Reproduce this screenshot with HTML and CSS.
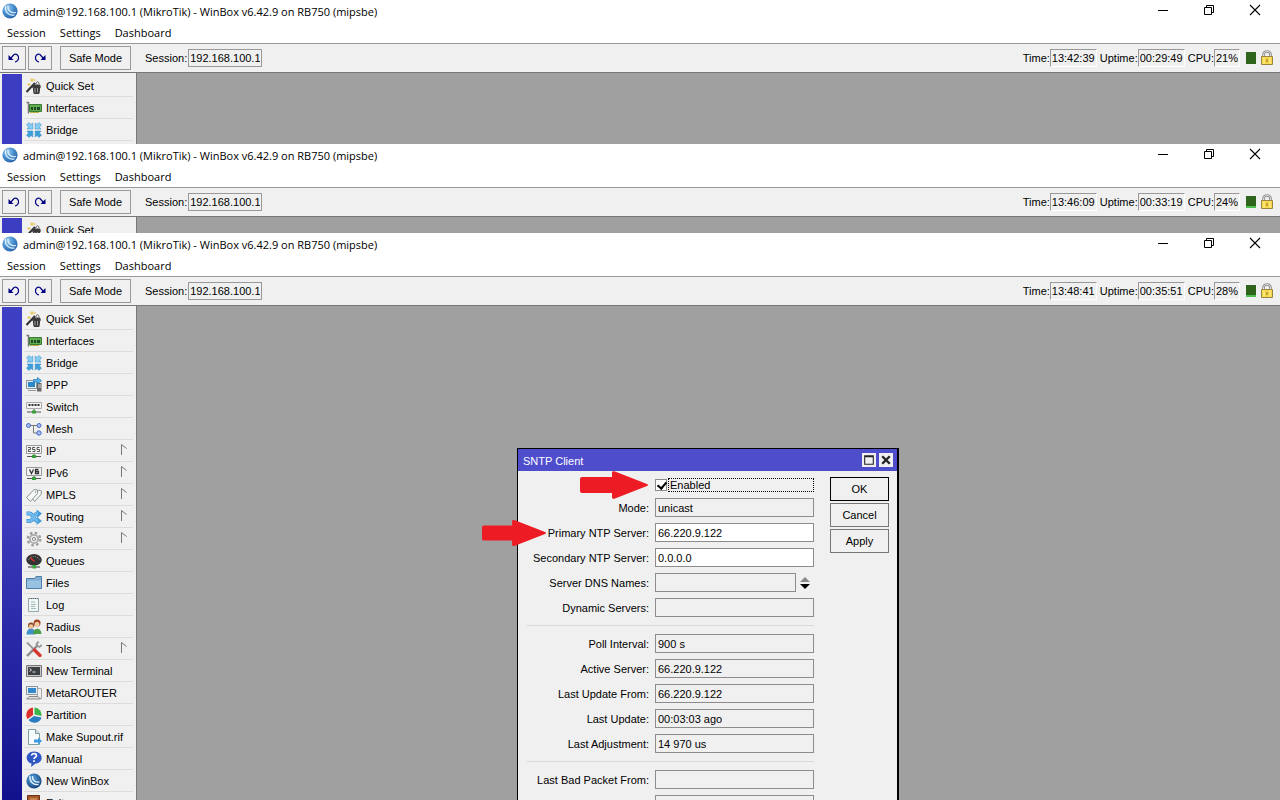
FILE: index.html
```
<!DOCTYPE html>
<html lang="en">
<head>
    <meta charset="utf-8">
    <title>WinBox - SNTP Client</title>
    <link rel="stylesheet" href="styles.css">
</head>
<body>
    <!-- icons -->
    <svg class="defs" aria-hidden="true">
        <defs>
            <radialGradient id="ball" cx="35%" cy="30%" r="75%">
                <stop offset="0" stop-color="#9fd0f2"/>
                <stop offset="0.5" stop-color="#4a90d0"/>
                <stop offset="1" stop-color="#2a62a8"/>
            </radialGradient>
            <radialGradient id="darkball" cx="40%" cy="35%" r="70%">
                <stop offset="0" stop-color="#5aa5e0"/>
                <stop offset="1" stop-color="#123f78"/>
            </radialGradient>
        </defs>
        <symbol id="i-logo" viewBox="0 0 16 16">
            <circle cx="8" cy="8" r="7.6" fill="url(#ball)"/>
            <path d="M3.500 3C2.500 9 7 13 12.500 12M6 2.500C5.500 7.500 9 10.500 14 9.500" fill="none" stroke="#e4f3fc" stroke-width="1.100"/>
        </symbol>
        <symbol id="i-winbox" viewBox="0 0 16 16">
            <circle cx="8" cy="8" r="7.600" fill="url(#darkball)"/>
            <path d="M4 3C3 8 7 12.500 12.500 11.500M6.500 3C6 7 9 9.500 13.500 9" fill="none" stroke="#e4f3fc" stroke-width="1.300"/>
        </symbol>
        <symbol id="i-undo" viewBox="0 0 12 12">
            <path d="M2.500 6.500L6 2.500C8.500 1.500 11 3.500 10.500 6.500 10.200 8.500 9 9.500 7 10" fill="none" stroke="#000080" stroke-width="1.200"/>
            <path d="M0.500 3v5h5z" fill="#000080"/>
        </symbol>
        <symbol id="i-redo" viewBox="0 0 12 12">
            <path d="M9.500 6.500L6 2.500C3.500 1.500 1 3.500 1.500 6.500 1.800 8.500 3 9.500 5 10" fill="none" stroke="#000080" stroke-width="1.200"/>
            <path d="M11.500 3v5h-5z" fill="#000080"/>
        </symbol>
        <symbol id="i-lock" viewBox="0 0 14 16">
            <path d="M3.500 7V4.500C3.500 0.500 10.500 0.500 10.500 4.500V7" fill="none" stroke="#8a8a8a" stroke-width="2.600"/>
            <path d="M3.500 7V4.500C3.500 0.500 10.500 0.500 10.500 4.500V7" fill="none" stroke="#e4e4e4" stroke-width="1"/>
            <path d="M1.500 6.500h11v8h-11z" fill="#f6d64a" stroke="#9a8540"/>
            <path d="M4 7v7M10 7v7" stroke="#fdf09a"/>
            <path d="M7 9v3" stroke="#b08c2c" stroke-width="1.500"/>
        </symbol>
        <symbol id="i-quick" viewBox="0 0 16 16">
            <path d="M0.500 14L9 5" stroke="#333" stroke-width="2"/>
            <path d="M6 9h9M7 7h7l-1 8.500H8z" fill="#3a3a3a" stroke="#3a3a3a"/>
            <path d="M9 10v4.500M11.500 10v4.500" stroke="#999"/>
            <path d="M10 6c0-3 3-3 3 0" fill="none" stroke="#666"/>
            <path d="M6 0v4M4 2h4M3 5v3M1.500 6.500h3M9 1v2" stroke="#e2c244"/>
        </symbol>
        <symbol id="i-iface" viewBox="0 0 16 16">
            <path d="M0.500 2.500h2v11" fill="none" stroke="#777" stroke-width="1.500"/>
            <path d="M3.500 4.500h12v7h-12z" fill="#5fae50" stroke="#3a7c36"/>
            <path d="M5 7h2v3H5zM8 7h2v3H8zM11 7h3v3h-3z" fill="#1f4a22"/>
            <path d="M4 12.500h9" stroke="#bfae48"/>
        </symbol>
        <symbol id="i-bridge" viewBox="0 0 16 16">
            <g stroke="#2f86c4" stroke-width="0.500">
                <path d="M0.500 3l2.500-2.500 2 2 1.800-1.500v6H1l1.700-2z" fill="#86cdf2"/>
                <path d="M15.500 3l-2.500-2.500-2 2L9.200 1v6H15l-1.700-2z" fill="#86cdf2"/>
                <path d="M0.500 13l2.500 2.500 2-2 1.800 1.500V9H1l1.700 2z" fill="#3d9fd8"/>
                <path d="M15.500 13l-2.500 2.500-2-2L9.200 15V9H15l-1.700 2z" fill="#3d9fd8"/>
            </g>
        </symbol>
        <symbol id="i-ppp" viewBox="0 0 16 16">
            <path d="M0.500 3.500h10v8h-10z" fill="#e8eef2" stroke="#8b959c"/>
            <path d="M2 5h7v5H2z" fill="#2c86c8"/>
            <path d="M2 13.500h8" stroke="#999"/>
            <path d="M11 6h4.500v8.500H11z" fill="#666"/>
            <path d="M12 8h3M12 10h3" stroke="#ddd"/>
            <path d="M7.500 2.500h4V0.500l4 3.200-4 3.200V5h-4z" fill="#56b4ec" stroke="#1d72b4" stroke-width="0.700"/>
        </symbol>
        <symbol id="i-switch" viewBox="0 0 16 16">
            <path d="M0.500 3.500h15v6h-15z" fill="#f4f4f4" stroke="#aaa"/>
            <path d="M2.500 6h2M5.500 6h2M8.500 6h2M11.500 6h2" stroke="#333" stroke-width="2"/>
            <path d="M1 13h14M8 10v3" stroke="#555"/>
            <path d="M6 11.500h4v3H6z" fill="#35a035"/>
        </symbol>
        <symbol id="i-mesh" viewBox="0 0 16 16">
            <path d="M4 4.500h7M7.500 5v7H11" fill="none" stroke="#777"/>
            <g fill="#a6bdf4" stroke="#4968c4">
                <circle cx="2.500" cy="4.500" r="2"/>
                <circle cx="13" cy="4.500" r="2"/>
                <circle cx="13" cy="12" r="2.200"/>
            </g>
        </symbol>
        <symbol id="i-net" viewBox="0 0 16 16">
            <path d="M0.500 2.500h15v8h-15z" fill="#f4f4f4" stroke="#999"/>
            <path d="M1 13.500h14M8 11v3" stroke="#555"/>
            <path d="M6 12h4v3H6z" fill="#35a035"/>
        </symbol>
        <symbol id="i-ip" viewBox="0 0 16 16">
            <use href="#i-net"/>
            <path d="M2 4.500h2.500v2H2.500v2H5M9 4.500H6.500v2H9v2H6.500M13.500 4.500H11v2h2.500v2H11" fill="none" stroke="#444" stroke-width="0.900"/>
        </symbol>
        <symbol id="i-ipv6" viewBox="0 0 16 16">
            <use href="#i-net"/>
            <path d="M3.500 4.500L5.500 8.500 7.500 4.500M12.500 4.500H9.500v4h3v-2h-3" fill="none" stroke="#333" stroke-width="1.300"/>
        </symbol>
        <symbol id="i-mpls" viewBox="0 0 16 16">
            <g fill="#f6f8f8" stroke="#8b9696">
                <path d="M6 10.500L12.500 3l3 1-.5 3.500-6.500 7z"/>
                <path d="M0.500 10.500L8 2.500l3.500.5v3.500l-7 8z"/>
            </g>
            <circle cx="9.500" cy="5" r="0.800" fill="#8b9696"/>
        </symbol>
        <symbol id="i-routing" viewBox="0 0 16 16">
            <path d="M0.500 4.500h3C7 4.500 8 12 12 12M0.500 12h3C7.500 12 7.500 4.500 12 4.500" fill="none" stroke="#3a88c8" stroke-width="4"/>
            <path d="M10.500 0.500l5.500 4-5 4.500zM11 8l5 4-5.500 4z" fill="#469ddc"/>
            <path d="M1 4.500h2.500C7 4.500 8 12 12 12M1 12h2.500C7.500 12 7.500 4.500 12 4.500" fill="none" stroke="#6db9ec" stroke-width="3"/>
        </symbol>
        <symbol id="i-system" viewBox="0 0 16 16">
            <circle cx="8" cy="8" r="6.300" fill="none" stroke="#9a9a9a" stroke-width="2.200" stroke-dasharray="2.500 2.450"/>
            <circle cx="8" cy="8" r="4.200" fill="#eee" stroke="#aaa" stroke-width="1.800"/>
            <circle cx="8" cy="8" r="1.600" fill="#f0f0f0" stroke="#888"/>
        </symbol>
        <symbol id="i-queues" viewBox="0 0 16 16">
            <ellipse cx="8" cy="6.800" rx="7.800" ry="5.800" fill="#333"/>
            <path d="M2.500 7C4 2.500 12 2.500 13.500 7" fill="none" stroke="#8f8f8f" stroke-dasharray="1 1"/>
            <path d="M4 4.500L8.500 8.500" stroke="#e03030" stroke-width="1.300"/>
            <path d="M2 14h12" stroke="#333"/>
            <path d="M6.500 12h3.500v3.500H6.500z" fill="#3aa83a"/>
        </symbol>
        <symbol id="i-files" viewBox="0 0 16 16">
            <path d="M0.500 3.500h8l1.500-2h5.500v12H0.500z" fill="#7faed2" stroke="#4d7ea6"/>
            <path d="M1 5.500h14V13H1z" fill="#98c2e2"/>
        </symbol>
        <symbol id="i-log" viewBox="0 0 16 16">
            <path d="M2.500 1.500h10v13h-10z" fill="#eff6f5" stroke="#94aaa9"/>
            <path d="M5 5h4M5 7.500h5M5 9.500h4M5 11.500h5" stroke="#9fbcba"/>
            <path d="M3 1.500h9" stroke="#667" stroke-dasharray="1 1"/>
        </symbol>
        <symbol id="i-radius" viewBox="0 0 16 16">
            <path d="M0.500 15.500c0-8 9-8 9 0z" fill="#3f8fc8"/>
            <path d="M7 15c0-7 8.500-7 8.500 0z" fill="#4c9e4a"/>
            <circle cx="5" cy="6.500" r="3" fill="#8a4b22"/>
            <circle cx="5" cy="7.500" r="2.200" fill="#f0c49a"/>
            <circle cx="11" cy="4" r="3.500" fill="#9c3f20"/>
            <circle cx="11" cy="5.200" r="2.500" fill="#f2c8a0"/>
        </symbol>
        <symbol id="i-tools" viewBox="0 0 16 16">
            <path d="M1 15L12 4" stroke="#8a8a8a" stroke-width="2.400"/>
            <path d="M10 4l2.500-3.500M12.500 6.500L16 4" stroke="#999" stroke-width="2"/>
            <path d="M1 1.500L9 9.500" stroke="#999" stroke-width="1.800"/>
            <path d="M8.500 9l5.500 5.500" stroke="#d23a30" stroke-width="3.400" stroke-linecap="round"/>
        </symbol>
        <symbol id="i-term" viewBox="0 0 16 16">
            <path d="M0.500 2.500h15v11h-15z" fill="#ccc" stroke="#777"/>
            <path d="M2 4h12v8H2z" fill="#3c4045"/>
            <path d="M3.500 5.500l2 1.500-2 1.500M6.500 9h3" fill="none" stroke="#ddd"/>
        </symbol>
        <symbol id="i-meta" viewBox="0 0 16 16">
            <path d="M0.500 1.500h11v8H0.500z" fill="#e8eef2" stroke="#8b959c"/>
            <path d="M2 3h8v5H2z" fill="#3488cc"/>
            <path d="M11.500 3.500h4v10h-4z" fill="#eee" stroke="#aaa"/>
            <path d="M0.500 14L3 11.500h9L14.500 14z" fill="#ddd" stroke="#888"/>
        </symbol>
        <symbol id="i-part" viewBox="0 0 16 16">
            <path d="M7 8V0.500A7.500 7.500 0 0 0 1.500 12z" fill="#dd2f2c"/>
            <path d="M8.500 7.500V0.500A7.500 7.500 0 0 1 15.500 9z" fill="#3bb54a"/>
            <path d="M8 9l7.500 1.500A7.500 7.500 0 0 1 2.500 13z" fill="#2a7dc0"/>
        </symbol>
        <symbol id="i-supout" viewBox="0 0 16 16">
            <path d="M2.500 0.500h7l4 4v11h-11z" fill="#f8fbfb" stroke="#7fa0a0"/>
            <path d="M9.500 0.500v4h4" fill="#dde" stroke="#7fa0a0"/>
            <path d="M8 10.500h4V8.500l4 3.500-4 3.500v-2H8z" fill="#3d9be0"/>
        </symbol>
        <symbol id="i-manual" viewBox="0 0 16 16">
            <path d="M8 0.500c10 0 10 12 1.500 12L5 16l.5-3.500C-1.500 11-1 0.500 8 0.500z" fill="#3058c4"/>
            <path d="M5.500 4.500c0-2.500 5-2.500 5 0C10.500 6.500 8 6.200 8 8M8 9.300v1.700" fill="none" stroke="#fff" stroke-width="1.700"/>
        </symbol>
        <symbol id="i-exit" viewBox="0 0 16 16">
            <path d="M1.500 0.500h12v15h-12z" fill="#a8582a" stroke="#6b3312"/>
            <path d="M4 3h7v4H4zM4 9h7v5H4z" fill="#c98650"/>
        </symbol>
        <symbol id="i-more" viewBox="0 0 6 11">
            <path d="M0.500 11V0.500L5.500 4.500" fill="none" stroke="#777"/>
        </symbol>
        <symbol id="i-min" viewBox="0 0 12 12">
            <path d="M1 6.500h10" stroke="#000"/>
        </symbol>
        <symbol id="i-restore" viewBox="0 0 12 12">
            <path d="M1.500 3.500h7v7h-7zM3.500 3.500v-2h7v7h-2" fill="none" stroke="#000"/>
        </symbol>
        <symbol id="i-close" viewBox="0 0 12 12">
            <path d="M1 1l10 10M11 1L1 11" stroke="#000" stroke-width="1.100"/>
        </symbol>
        <symbol id="i-arrow" viewBox="0 0 68 28">
            <path d="M2 6h30V1.500q0-2 3-1L67 13q2 1 0 2L35 27.500q-3 1-3-1V22H2q-2 0-2-2V8q0-2 2-2z" fill="#ed1c24"/>
        </symbol>
    </svg>

    <section class="window strip-tall">
        <header class="titlebar">
            <svg class="icon"><use href="#i-logo"/></svg>
            <h1>admin@192.168.100.1 (MikroTik) - WinBox v6.42.9 on RB750 (mipsbe)</h1>
            <button aria-label="Minimize"><svg><use href="#i-min"/></svg></button>
            <button aria-label="Restore"><svg><use href="#i-restore"/></svg></button>
            <button aria-label="Close"><svg><use href="#i-close"/></svg></button>
        </header>
        <nav class="menubar">
            <a href="#">Session</a>
            <a href="#">Settings</a>
            <a href="#">Dashboard</a>
        </nav>
        <div class="toolbar">
            <button class="tool" aria-label="Undo"><svg><use href="#i-undo"/></svg></button>
            <button class="tool" aria-label="Redo"><svg><use href="#i-redo"/></svg></button>
            <button class="safe">Safe Mode</button>
            <label for="session1">Session:</label>
            <input class="session" id="session1" value="192.168.100.1" readonly>
            <div class="status">
                <label for="time1">Time:</label><input class="clock" id="time1" value="13:42:39" readonly>
                <label for="up1">Uptime:</label><input class="clock" id="up1" value="00:29:49" readonly>
                <label for="cpu1">CPU:</label><input class="cpu" id="cpu1" value="21%" readonly>
                <span class="load"></span>
                <svg class="lock"><use href="#i-lock"/></svg>
            </div>
        </div>
        <div class="work">
            <div class="brand"></div>
            <nav class="sidebar">
                <a href="#"><svg class="icon"><use href="#i-quick"/></svg>Quick Set</a>
                <a href="#"><svg class="icon"><use href="#i-iface"/></svg>Interfaces</a>
                <a href="#"><svg class="icon"><use href="#i-bridge"/></svg>Bridge</a>
            </nav>
            <main class="desktop"></main>
        </div>
    </section>

    <section class="window strip-short">
        <header class="titlebar">
            <svg class="icon"><use href="#i-logo"/></svg>
            <h1>admin@192.168.100.1 (MikroTik) - WinBox v6.42.9 on RB750 (mipsbe)</h1>
            <button aria-label="Minimize"><svg><use href="#i-min"/></svg></button>
            <button aria-label="Restore"><svg><use href="#i-restore"/></svg></button>
            <button aria-label="Close"><svg><use href="#i-close"/></svg></button>
        </header>
        <nav class="menubar">
            <a href="#">Session</a>
            <a href="#">Settings</a>
            <a href="#">Dashboard</a>
        </nav>
        <div class="toolbar">
            <button class="tool" aria-label="Undo"><svg><use href="#i-undo"/></svg></button>
            <button class="tool" aria-label="Redo"><svg><use href="#i-redo"/></svg></button>
            <button class="safe">Safe Mode</button>
            <label for="session2">Session:</label>
            <input class="session" id="session2" value="192.168.100.1" readonly>
            <div class="status">
                <label for="time2">Time:</label><input class="clock" id="time2" value="13:46:09" readonly>
                <label for="up2">Uptime:</label><input class="clock" id="up2" value="00:33:19" readonly>
                <label for="cpu2">CPU:</label><input class="cpu" id="cpu2" value="24%" readonly>
                <span class="load busy"></span>
                <svg class="lock"><use href="#i-lock"/></svg>
            </div>
        </div>
        <div class="work">
            <div class="brand"></div>
            <nav class="sidebar">
                <a href="#"><svg class="icon"><use href="#i-quick"/></svg>Quick Set</a>
            </nav>
            <main class="desktop"></main>
        </div>
    </section>

    <section class="window full">
        <header class="titlebar">
            <svg class="icon"><use href="#i-logo"/></svg>
            <h1>admin@192.168.100.1 (MikroTik) - WinBox v6.42.9 on RB750 (mipsbe)</h1>
            <button aria-label="Minimize"><svg><use href="#i-min"/></svg></button>
            <button aria-label="Restore"><svg><use href="#i-restore"/></svg></button>
            <button aria-label="Close"><svg><use href="#i-close"/></svg></button>
        </header>
        <nav class="menubar">
            <a href="#">Session</a>
            <a href="#">Settings</a>
            <a href="#">Dashboard</a>
        </nav>
        <div class="toolbar">
            <button class="tool" aria-label="Undo"><svg><use href="#i-undo"/></svg></button>
            <button class="tool" aria-label="Redo"><svg><use href="#i-redo"/></svg></button>
            <button class="safe">Safe Mode</button>
            <label for="session3">Session:</label>
            <input class="session" id="session3" value="192.168.100.1" readonly>
            <div class="status">
                <label for="time3">Time:</label><input class="clock" id="time3" value="13:48:41" readonly>
                <label for="up3">Uptime:</label><input class="clock" id="up3" value="00:35:51" readonly>
                <label for="cpu3">CPU:</label><input class="cpu" id="cpu3" value="28%" readonly>
                <span class="load busy"></span>
                <svg class="lock"><use href="#i-lock"/></svg>
            </div>
        </div>
        <div class="work">
            <div class="brand fade"></div>
            <nav class="sidebar">
                <a href="#"><svg class="icon"><use href="#i-quick"/></svg>Quick Set</a>
                <a href="#"><svg class="icon"><use href="#i-iface"/></svg>Interfaces</a>
                <a href="#"><svg class="icon"><use href="#i-bridge"/></svg>Bridge</a>
                <a href="#"><svg class="icon"><use href="#i-ppp"/></svg>PPP</a>
                <a href="#"><svg class="icon"><use href="#i-switch"/></svg>Switch</a>
                <a href="#"><svg class="icon"><use href="#i-mesh"/></svg>Mesh</a>
                <a href="#"><svg class="icon"><use href="#i-ip"/></svg>IP<svg class="more"><use href="#i-more"/></svg></a>
                <a href="#"><svg class="icon"><use href="#i-ipv6"/></svg>IPv6<svg class="more"><use href="#i-more"/></svg></a>
                <a href="#"><svg class="icon"><use href="#i-mpls"/></svg>MPLS<svg class="more"><use href="#i-more"/></svg></a>
                <a href="#"><svg class="icon"><use href="#i-routing"/></svg>Routing<svg class="more"><use href="#i-more"/></svg></a>
                <a href="#"><svg class="icon"><use href="#i-system"/></svg>System<svg class="more"><use href="#i-more"/></svg></a>
                <a href="#"><svg class="icon"><use href="#i-queues"/></svg>Queues</a>
                <a href="#"><svg class="icon"><use href="#i-files"/></svg>Files</a>
                <a href="#"><svg class="icon"><use href="#i-log"/></svg>Log</a>
                <a href="#"><svg class="icon"><use href="#i-radius"/></svg>Radius</a>
                <a href="#"><svg class="icon"><use href="#i-tools"/></svg>Tools<svg class="more"><use href="#i-more"/></svg></a>
                <a href="#"><svg class="icon"><use href="#i-term"/></svg>New Terminal</a>
                <a href="#"><svg class="icon"><use href="#i-meta"/></svg>MetaROUTER</a>
                <a href="#"><svg class="icon"><use href="#i-part"/></svg>Partition</a>
                <a href="#"><svg class="icon"><use href="#i-supout"/></svg>Make Supout.rif</a>
                <a href="#"><svg class="icon"><use href="#i-manual"/></svg>Manual</a>
                <a href="#"><svg class="icon"><use href="#i-winbox"/></svg>New WinBox</a>
                <a href="#"><svg class="icon"><use href="#i-exit"/></svg>Exit</a>
            </nav>
            <main class="desktop">
                <form class="dialog">
                    <div class="dialog-title">
                        <h2>SNTP Client</h2>
                        <button type="button" aria-label="Maximize"><svg viewBox="0 0 13 13"><path d="M2.500 2.500h8v8h-8zM2 3.500h9" fill="none" stroke="#222"/></svg></button>
                        <button type="button" aria-label="Close"><svg viewBox="0 0 13 13"><path d="M3 3l7 7M10 3l-7 7" stroke="#222" stroke-width="2.200"/></svg></button>
                    </div>
                    <div class="dialog-body">
                        <div class="fields">
                            <div class="row check">
                                <input type="checkbox" id="enabled" checked>
                                <label for="enabled">Enabled</label>
                            </div>
                            <div class="row"><label for="mode">Mode:</label><input id="mode" value="unicast" readonly></div>
                            <div class="row"><label for="primary">Primary NTP Server:</label><input id="primary" value="66.220.9.122"></div>
                            <div class="row"><label for="secondary">Secondary NTP Server:</label><input id="secondary" value="0.0.0.0"></div>
                            <div class="row">
                                <label for="dns">Server DNS Names:</label><input id="dns" readonly>
                                <button type="button" class="spin" aria-label="Add or remove"><svg viewBox="0 0 10 12"><path d="M0 5l5-5 5 5z" fill="#888"/><path d="M0 7l5 5 5-5z" fill="#000"/></svg></button>
                            </div>
                            <div class="row"><label for="dynamic">Dynamic Servers:</label><input id="dynamic" readonly></div>
                            <hr>
                            <div class="row"><label for="poll">Poll Interval:</label><input id="poll" value="900 s" readonly></div>
                            <div class="row"><label for="active">Active Server:</label><input id="active" value="66.220.9.122" readonly></div>
                            <div class="row"><label for="from">Last Update From:</label><input id="from" value="66.220.9.122" readonly></div>
                            <div class="row"><label for="update">Last Update:</label><input id="update" value="00:03:03 ago" readonly></div>
                            <div class="row"><label for="adjust">Last Adjustment:</label><input id="adjust" value="14 970 us" readonly></div>
                            <hr>
                            <div class="row"><label for="badfrom">Last Bad Packet From:</label><input id="badfrom" readonly></div>
                            <div class="row"><label for="bad">Last Bad Packet:</label><input id="bad" readonly></div>
                        </div>
                        <div class="actions">
                            <button class="ok">OK</button>
                            <button type="button">Cancel</button>
                            <button type="button">Apply</button>
                        </div>
                    </div>
                    <svg class="arrow to-enabled"><use href="#i-arrow"/></svg>
                    <svg class="arrow to-primary"><use href="#i-arrow"/></svg>
                </form>
            </main>
        </div>
    </section>
</body>
</html>
```
FILE: styles.css
```
* {
    box-sizing: border-box;
}

body {
    margin: 0;
    height: 100vh;
    overflow: hidden;
    display: flex;
    flex-direction: column;
    background: #fff;
    color: #000;
    font: 11px/16px "Liberation Sans", Arial, sans-serif;
    white-space: nowrap;
}

button, input {
    font: inherit;
    color: inherit;
    margin: 0;
    padding: 0;
    border-radius: 0;
}

a {
    color: inherit;
    text-decoration: none;
}

.defs {
    position: absolute;
    width: 0;
    height: 0;
}

.icon {
    width: 16px;
    height: 16px;
    flex: none;
}

/* windows */
.window {
    display: flex;
    flex-direction: column;
    flex: none;
    overflow: hidden;
}

.strip-tall {
    height: 144px;
}

.strip-short {
    height: 89px;
}

.full {
    flex: 1;
    min-height: 0;
}

.titlebar {
    display: flex;
    align-items: center;
    flex: none;
    height: 22px;
    padding: 0 2px;
}

.titlebar h1 {
    flex: 1;
    margin: 2px 0 0 5px;
    font: 11px/16px "Open Sans", "Noto Sans", sans-serif;
}

.titlebar button {
    align-self: flex-start;
    width: 46px;
    height: 20px;
    border: 0;
    background: none;
    display: flex;
    align-items: center;
    justify-content: center;
}

.titlebar button svg {
    width: 12px;
    height: 12px;
}

.menubar {
    display: flex;
    align-items: center;
    gap: 14px;
    flex: none;
    height: 22px;
    padding: 0 7px;
    border-bottom: 1px solid #999;
    font: 11px/16px "Open Sans", "Noto Sans", sans-serif;
}

.toolbar {
    display: flex;
    align-items: center;
    flex: none;
    height: 29px;
    padding: 0 6px 0 2px;
    background: #f0f0f0;
    border-bottom: 1px solid #777;
}

.toolbar button {
    height: 24px;
    border: 1px solid #999;
    background: #f0f0f0;
}

.toolbar .tool {
    width: 24px;
    margin-right: 2px;
    display: flex;
    align-items: center;
    justify-content: center;
}

.tool svg {
    width: 12px;
    height: 12px;
}

.toolbar .safe {
    width: 71px;
    margin: 0 14px 0 6px;
}

.toolbar input {
    height: 18px;
    border: 1px solid #999;
    background: #f0f0f0;
    padding: 0 1px;
}

.toolbar .session {
    width: 74px;
    margin-left: 1px;
}

.status {
    display: flex;
    align-items: center;
    margin-left: auto;
}

.status input {
    border-right-color: #fff;
    border-bottom-color: #fff;
    margin: 0 3px 0 0;
}

.status .clock {
    width: 47px;
}

.status .cpu {
    width: 26px;
    margin-right: 6px;
}

.load {
    width: 10px;
    height: 12px;
    margin-right: 4px;
    background: #2f641c;
}

.busy {
    border-bottom: 2px solid #4fc04f;
}

.lock {
    width: 14px;
    height: 16px;
}

.work {
    display: flex;
    flex: 1;
    min-height: 0;
    background: #f0f0f0;
}

.brand {
    width: 20px;
    margin: 1px 0 0 2px;
    background: #3d3dc1;
}

.fade {
    background: linear-gradient(#3f3fc4, #3c3cbe 40%, #12128c);
}

.sidebar {
    width: 115px;
    padding: 2px 3px 0 2px;
    border-right: 1px solid #777;
    overflow: hidden;
}

.sidebar a {
    display: flex;
    align-items: center;
    gap: 4px;
    height: 22px;
    padding: 0 6px 0 2px;
    border-bottom: 1px solid #dcdcdc;
}

.more {
    width: 6px;
    height: 11px;
    margin: 0 0 2px auto;
}

.desktop {
    position: relative;
    flex: 1;
    background: #a0a0a0;
}

/* SNTP dialog */
.dialog {
    position: absolute;
    left: 380px;
    top: 142px;
    width: 382px;
    border: 1px solid #000;
    border-right-width: 2px;
    background: #f0f0f0;
}

.dialog-title {
    display: flex;
    align-items: center;
    gap: 3px;
    height: 22px;
    padding: 0 4px 0 5px;
    background: #4e4ecd;
    color: #fff;
}

.dialog-title h2 {
    flex: 1;
    margin: 2px 0 0;
    font-size: 11px;
    font-weight: normal;
}

.dialog-title button {
    width: 14px;
    height: 14px;
    border: 0;
    background: #f0f0f0;
}

.dialog-title svg {
    display: block;
    width: 14px;
    height: 14px;
}

.dialog-body {
    display: flex;
    gap: 16px;
    padding: 4px 8px 8px 9px;
}

.fields {
    flex: 1;
}

.row {
    display: flex;
    align-items: center;
    height: 25px;
}

.row label {
    flex: 1;
    padding: 1px 6px 0 0;
    text-align: right;
}

.row input {
    width: 159px;
    height: 19px;
    padding: 0 2px;
    border: 1px solid #8c8c8c;
    background: #fff;
}

.row input:read-only {
    background: #f0f0f0;
}

.row #dns {
    width: 141px;
}

.spin {
    width: 18px;
    height: 18px;
    padding: 3px 4px;
    border: 0;
    background: none;
}

.spin svg {
    display: block;
    width: 10px;
    height: 12px;
}

.check {
    height: 20px;
    padding-left: 128px;
}

.row input[type="checkbox"] {
    appearance: none;
    width: 12px;
    height: 12px;
    padding: 0;
    background: #fff;
}

.row input[type="checkbox"]:checked::after {
    content: "";
    display: block;
    width: 4px;
    height: 7px;
    margin: 0 0 0 3px;
    border: solid #000;
    border-width: 0 2px 2px 0;
    transform: rotate(40deg);
}

.check label {
    height: 14px;
    margin-left: 1px;
    padding: 0 0 0 1px;
    border: 1px dotted #000;
    line-height: 12px;
    text-align: left;
}

.fields hr {
    height: 1px;
    margin: 5px 0;
    border: 0;
    background: #d8d8d8;
}

.actions {
    display: flex;
    flex-direction: column;
    gap: 2px;
    width: 59px;
    padding-top: 2px;
}

.actions button {
    height: 24px;
    border: 1px solid #777;
    background: #f0f0f0;
}

.actions .ok {
    border-color: #000;
}

/* pointers laid over the dialog */
.arrow {
    position: absolute;
    width: 68px;
    height: 28px;
}

.to-enabled {
    left: 62px;
    top: 22px;
}

.to-primary {
    left: -36px;
    top: 70px;
    width: 64px;
}
```
